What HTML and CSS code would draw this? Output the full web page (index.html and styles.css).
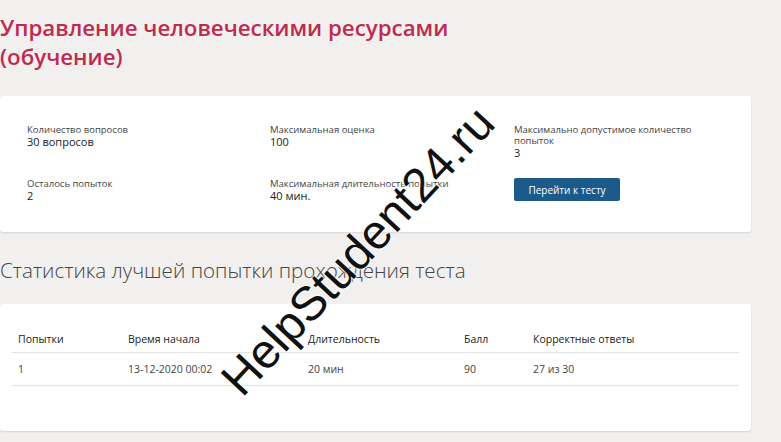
FILE: index.html
```html
<!DOCTYPE html>
<html lang="ru">
<head>
<meta charset="utf-8">
<link rel="stylesheet" href="styles.css">
</head>
<body>
<main class="page">
  <h1 class="title">Управление человеческими ресурсами<br>(обучение)</h1>

  <section class="card info">
    <div class="grid">
      <div class="field">
        <div class="label">Количество вопросов</div>
        <div class="value">30 вопросов</div>
      </div>
      <div class="field">
        <div class="label">Максимальная оценка</div>
        <div class="value">100</div>
      </div>
      <div class="field">
        <div class="label">Максимально допустимое количество<br>попыток</div>
        <div class="value">3</div>
      </div>
      <div class="field">
        <div class="label">Осталось попыток</div>
        <div class="value">2</div>
      </div>
      <div class="field">
        <div class="label">Максимальная длительность попытки</div>
        <div class="value">40 мин.</div>
      </div>
      <div class="field">
        <button class="btn">Перейти к тесту</button>
      </div>
    </div>
  </section>

  <h2 class="section-title">Статистика лучшей попытки прохождения теста</h2>

  <section class="card stats">
    <table class="table">
      <thead>
        <tr>
          <th class="c1">Попытки</th>
          <th class="c2">Время начала</th>
          <th class="c3">Длительность</th>
          <th class="c4">Балл</th>
          <th>Корректные ответы</th>
        </tr>
      </thead>
      <tbody>
        <tr>
          <td>1</td>
          <td>13-12-2020 00:02</td>
          <td>20 мин</td>
          <td>90</td>
          <td>27 из 30</td>
        </tr>
      </tbody>
    </table>
  </section>

  <div class="watermark">HelpStudent24.ru</div>
</main>
</body>
</html>
```

FILE: styles.css
```css
html, body {
  margin: 0;
  padding: 0;
  background: #f1f0ee;
}

.page {
  position: relative;
  width: 781px;
  height: 442px;
  overflow: hidden;
  font-family: "Open Sans", "Noto Sans", sans-serif;
  color: #333;
}

.title {
  margin: 0;
  padding-top: 13px;
  font-family: "Open Sans", sans-serif;
  font-weight: 600;
  font-size: 22.3px;
  line-height: 29px;
  color: #c02a4f;
}

.card {
  width: 751px;
  background: #fff;
  border-radius: 3px;
  box-shadow: 0 1px 2px rgba(0, 0, 0, 0.12);
  box-sizing: border-box;
}

.info {
  margin-top: 25px;
  height: 136px;
  padding: 28px 0 0 27px;
}

.grid {
  display: grid;
  grid-template-columns: 243px 244px 230px;
  row-gap: 19px;
}

.label {
  font-size: 9.5px;
  line-height: 11px;
  color: #444;
}

.value {
  font-size: 11px;
  line-height: 13px;
  color: #222;
}

.btn {
  display: block;
  margin: 0;
  width: 106px;
  height: 23px;
  padding: 0;
  border: none;
  border-radius: 2px;
  background: #1c5a8b;
  color: #fff;
  font-family: "Open Sans", sans-serif;
  font-size: 10px;
}

.section-title {
  margin: 25px 0 0;
  font-family: "Open Sans", sans-serif;
  font-weight: 300;
  font-size: 20.6px;
  line-height: 26px;
  color: #444;
}

.stats {
  margin-top: 21px;
  height: 127px;
  padding: 21px 12px 0;
}

.table {
  width: 100%;
  border-collapse: collapse;
  font-size: 10.5px;
  color: #333;
}

.table th,
.table td {
  text-align: left;
  padding: 0 0 0 6px;
  font-weight: 400;
}

.table th {
  height: 27px;
  border-bottom: 1px solid #e2e2e2;
  color: #222;
}

.table td {
  height: 32px;
  border-bottom: 1px solid #e2e2e2;
  color: #444;
}

.c1 { width: 104px; }
.c2 { width: 174px; }
.c3 { width: 150px; }
.c4 { width: 63px; }

.watermark {
  position: absolute;
  left: 358px;
  top: 251px;
  transform: translate(-50%, -50%) rotate(-47deg);
  font-family: "Liberation Sans", Arial, sans-serif;
  font-size: 48px;
  line-height: 1;
  white-space: nowrap;
  color: #111;
  text-shadow: 0 0 2px #fff, 0 0 2px #fff, 0 0 3px #fff;
  pointer-events: none;
}
```
